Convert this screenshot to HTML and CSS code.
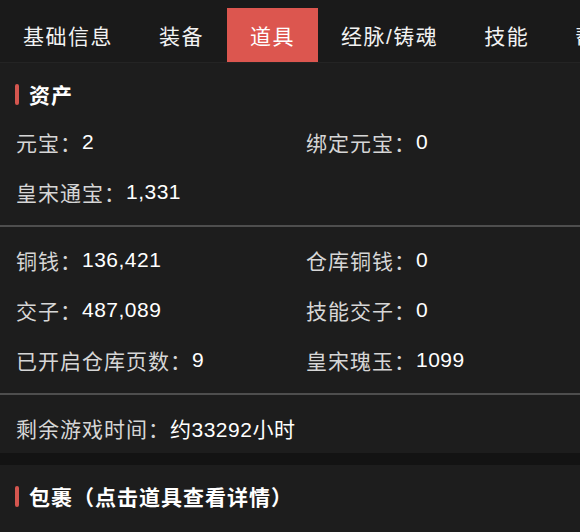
FILE: index.html
```html
<!DOCTYPE html>
<html lang="zh-CN">
<head>
<meta charset="utf-8">
<title>道具</title>
<link rel="stylesheet" href="styles.css">
</head>
<body>
  <nav class="tabs">
    <div class="tab">基础信息</div>
    <div class="tab">装备</div>
    <div class="tab active">道具</div>
    <div class="tab">经脉/铸魂</div>
    <div class="tab">技能</div>
    <div class="tab">帮会</div>
  </nav>

  <section class="panel">
    <h2 class="panel-title">资产</h2>
    <div class="group first">
      <div class="item"><span class="label">元宝：</span><span class="value">2</span></div>
      <div class="item"><span class="label">绑定元宝：</span><span class="value">0</span></div>
      <div class="item"><span class="label">皇宋通宝：</span><span class="value">1,331</span></div>
    </div>
    <div class="group">
      <div class="item"><span class="label">铜钱：</span><span class="value">136,421</span></div>
      <div class="item"><span class="label">仓库铜钱：</span><span class="value">0</span></div>
      <div class="item"><span class="label">交子：</span><span class="value">487,089</span></div>
      <div class="item"><span class="label">技能交子：</span><span class="value">0</span></div>
      <div class="item"><span class="label">已开启仓库页数：</span><span class="value">9</span></div>
      <div class="item"><span class="label">皇宋瑰玉：</span><span class="value">1099</span></div>
    </div>
    <div class="group last">
      <div class="item wide"><span class="label">剩余游戏时间：</span><span class="value">约33292小时</span></div>
    </div>
  </section>

  <section class="panel bag">
    <h2 class="panel-title">包裹（点击道具查看详情）</h2>
  </section>
</body>
</html>
```

FILE: styles.css
```css
html, body {
  margin: 0;
  padding: 0;
}

body {
  width: 580px;
  height: 532px;
  overflow: hidden;
  background: #131313;
  color: #ffffff;
  font-family: "Liberation Sans", "Noto Sans CJK SC", sans-serif;
  font-size: 21px;
}

/* top tab strip */
.tabs {
  display: flex;
  flex-wrap: nowrap;
  height: 63px;
  padding-top: 8px;
  box-sizing: border-box;
  background: #1a1a1a;
  border-bottom: 1px solid #242424;
  overflow: hidden;
  white-space: nowrap;
}

.tab {
  flex: none;
  display: flex;
  align-items: center;
  padding: 0 23px;
  color: #f2f2f2;
  letter-spacing: 1.5px;
}

.tab.active {
  background: #dc564f;
  color: #ffffff;
}

/* content panels */
.panel {
  background: #1d1d1d;
  padding-top: 20px;
  margin-bottom: 12px;
}

.panel.bag {
  min-height: 160px;
}

.panel-title {
  display: flex;
  align-items: center;
  gap: 10px;
  margin: 0;
  padding-left: 15px;
  height: 22px;
  font-size: 21px;
  font-weight: 600;
  letter-spacing: 1px;
  color: #ffffff;
}

.panel-title::before {
  content: "";
  width: 4px;
  height: 21px;
  border-radius: 2px;
  background: #d4564f;
}

.group {
  display: grid;
  grid-template-columns: 1fr 1fr;
  padding: 8px 0;
  border-top: 2px solid #4e4e4e;
}

.group.first {
  border-top: none;
  padding-top: 12px;
}

.group.last {
  padding-bottom: 0;
}

.item {
  height: 50px;
  display: flex;
  align-items: center;
  padding-left: 16px;
  white-space: nowrap;
}

.item.wide {
  grid-column: 1 / -1;
}

.label {
  color: #d6d6d6;
  letter-spacing: 1px;
}

.value {
  color: #ffffff;
  letter-spacing: 0.5px;
}
```
